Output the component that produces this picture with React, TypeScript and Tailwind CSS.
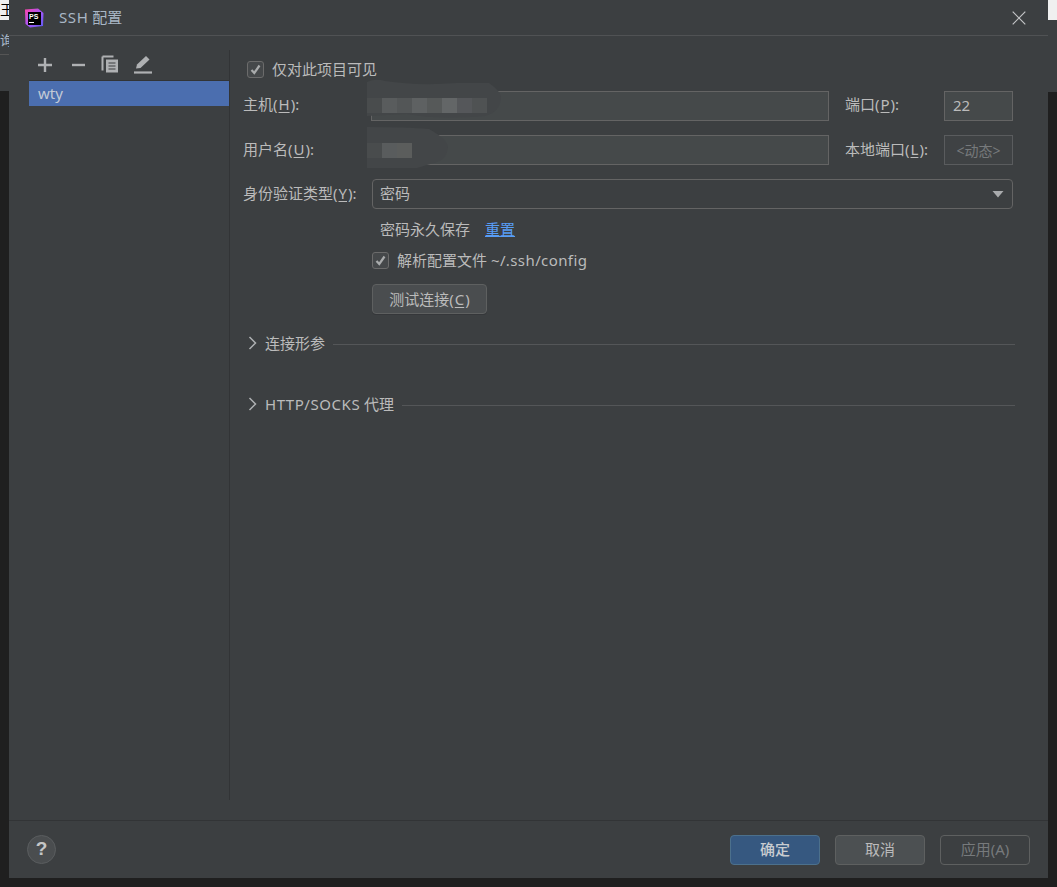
import type { ReactNode } from "react";

const cn = "font-['Noto_Sans','Noto_Sans_CJK_SC',sans-serif]";

function Mn({ children }: { children: ReactNode }) {
  return <span className="underline underline-offset-2 mx-[1px]">{children}</span>;
}

function Check({ children }: { children: ReactNode }) {
  return (
    <div className="flex items-center gap-2 h-[18px]">
      <span className="w-[17px] h-[17px] rounded-[3px] border border-[#6b6b6b] bg-[#45484a] flex items-center justify-center">
        <svg width="13" height="13" viewBox="0 0 13 13" fill="none">
          <path d="M2.5 7 L5.3 10 L10.5 2.5" stroke="#a9abac" strokeWidth="2.2" />
        </svg>
      </span>
      <span>{children}</span>
    </div>
  );
}

function Section({ children, className }: { children: ReactNode; className: string }) {
  return (
    <div className={`flex items-center h-5 ml-[5px] ${className}`}>
      <svg width="9" height="14" viewBox="0 0 9 14" fill="none" className="shrink-0">
        <path d="M1.5 1 L7.5 7 L1.5 13" stroke="#afb1b3" strokeWidth="1.5" />
      </svg>
      <span className="ml-[8px] mr-[8px] whitespace-nowrap">{children}</span>
      <div className="flex-1 h-px bg-[#545658] mt-[2px]" />
    </div>
  );
}

function FooterButton({ children, className }: { children: ReactNode; className: string }) {
  return (
    <button className={`w-[90px] h-[30px] rounded-[4px] border text-[15px] ${className}`}>{children}</button>
  );
}

function Smudge({ cells, className, cellTop, path, w, h }: { cells: string[]; className: string; cellTop: string; path: string; w: number; h: number }) {
  return (
    <div className={`absolute ${className}`}>
      <svg width={w} height={h} viewBox={`0 0 ${w} ${h}`}>
        <path d={path} fill="#434648" />
      </svg>
      <div className={`absolute left-0 flex ${cellTop}`}>
        {cells.map((c, i) => (
          <div key={i} className="w-[15px] h-[15px]" style={{ background: c }} />
        ))}
      </div>
    </div>
  );
}

export default function App() {
  return (
    <div className={`w-[1057px] h-[887px] flex bg-[#1f1f1f] overflow-hidden text-[15px] text-[#bbbbbb] ${cn}`}>
      <div className="w-[9px] flex flex-col overflow-hidden">
        <div className="h-[20px] bg-[#f0f0f0] text-black text-[14px] leading-[20px] whitespace-nowrap">王-</div>
        <div className="h-[35px] bg-[#3c3f41] border-b border-[#555] text-[#a9b7c6] text-[13px] leading-[40px] whitespace-nowrap">询(</div>
        <div className="h-[36px] bg-[#3c3f41]" />
      </div>

      <div className="w-[1039px] h-[878px] bg-[#3c3f41] flex flex-col relative">
        <div className="h-[36px] flex items-center border-b border-[#505254] pl-[15px] pr-[22px] shrink-0">
          <svg width="20" height="20" viewBox="0 0 20 20">
            <defs>
              <linearGradient id="ps" x1="0" y1="0" x2="1" y2="1">
                <stop offset="0" stopColor="#ff45a8" />
                <stop offset="0.5" stopColor="#a855f7" />
                <stop offset="1" stopColor="#5b5bf0" />
              </linearGradient>
            </defs>
            <path d="M1 1.5 L14 0.5 L19.5 5 L19 18 L6 19.5 L1.5 16 Z" fill="url(#ps)" />
            <rect x="4" y="4" width="13" height="13" fill="#000" />
            <text x="5" y="10.5" fontSize="7" fontWeight="700" fill="#fff" fontFamily="Liberation Sans">PS</text>
            <rect x="5" y="14" width="5" height="1" fill="#fff" />
          </svg>
          <span className="ml-[15px] text-[#a9b7c6]"><span className="tracking-[0.6px]">SSH</span> 配置</span>
          <svg width="14" height="14" viewBox="0 0 14 14" fill="none" className="ml-auto">
            <path d="M0.7 0.7 L13.3 13.3 M13.3 0.7 L0.7 13.3" stroke="#c4c6c7" strokeWidth="1.2" />
          </svg>
        </div>

        <div className="flex flex-1 min-h-0">
          <div className="w-[220px] pl-[20px] pt-[14px] shrink-0">
            <div className="h-[31px] flex items-start border-b border-[#323436]">
              <svg width="130" height="26" viewBox="0 0 130 26" className="text-[#afb1b3]">
                <path d="M9 15h14M16 8v14" stroke="currentColor" strokeWidth="2.4" fill="none" />
                <path d="M43 15h13" stroke="currentColor" strokeWidth="2.4" fill="none" />
                <path d="M73.5 6.5h11M73.5 6.5v14" stroke="currentColor" strokeWidth="2" fill="none" />
                <path d="M77 9.5h12v13h-12z" fill="currentColor" />
                <path d="M79.5 13h7M79.5 16h7M79.5 19h7" stroke="#3c3f41" strokeWidth="1.2" />
                <path d="M107 18.5l1-4 9-8.5 3.5 3.5-9 8.5z" fill="currentColor" />
                <path d="M105 22.5h18" stroke="currentColor" strokeWidth="2.2" />
              </svg>
            </div>
            <div className="h-[25px] bg-[#4b6eaf] pl-[9px] flex items-center text-[#c3cad6] text-[15px]">wty</div>
          </div>

          <div className="w-px h-[750px] bg-[#323436] mt-[14px]" />

          <div className="w-[786px] relative pl-[13px] pt-[24px]">
            <div className="ml-[4px]"><Check>仅对此项目可见</Check></div>

            <div className="flex items-center mt-[13px] h-[30px]">
              <label className="w-[128px] whitespace-nowrap -mt-[3px]">主机(<Mn>H</Mn>):</label>
              <div className="w-[458px] h-[30px] border border-[#646464] bg-[#45494a]" />
              <label className="ml-[16px] w-[99px] -mt-[3px]">端口(<Mn>P</Mn>):</label>
              <div className="w-[69px] h-[30px] border border-[#646464] bg-[#45494a] flex items-center pl-2 pb-[2px]">22</div>
            </div>

            <div className="flex items-center mt-[14px] h-[30px]">
              <label className="w-[128px] whitespace-nowrap -mt-[2px]">用户名(<Mn>U</Mn>):</label>
              <div className="w-[458px] h-[30px] border border-[#646464] bg-[#45494a]" />
              <label className="ml-[16px] w-[99px] whitespace-nowrap -mt-[2px]">本地端口(<Mn>L</Mn>):</label>
              <div className="w-[69px] h-[30px] border border-[#5a5c5e] bg-[#3f4244] flex items-center justify-center text-[#777a7c] text-[14px] whitespace-nowrap">&lt;动态&gt;</div>
            </div>

            <div className="flex items-center mt-[14px] h-[30px]">
              <label className="w-[129px] whitespace-nowrap -mt-[2px]">身份验证类型(<Mn>Y</Mn>):</label>
              <div className="w-[641px] h-[30px] rounded-[4px] border border-[#646464] bg-[#3c3f41] flex items-center pl-[7px] pr-[8px]">
                <span className="-mt-[1px]">密码</span>
                <svg width="12" height="8" viewBox="0 0 12 8" className="ml-auto">
                  <path d="M0.5 1h11L6 7.5z" fill="#a9abad" />
                </svg>
              </div>
            </div>

            <div className="ml-[137px] mt-[10px] h-[20px] flex items-center">
              <span>密码永久保存</span>
              <span className="ml-[15px] text-[#589df6] underline underline-offset-1">重置</span>
            </div>

            <div className="ml-[129px] mt-[12px]">
              <Check>解析配置文件 <span className="tracking-[0.4px]">~/.ssh/config</span></Check>
            </div>

            <button className="ml-[129px] mt-[15px] w-[115px] h-[30px] rounded-[4px] border border-[#5e6060] bg-[#4a4d4f] block text-[15px] text-[#bbbbbb] shadow-[0_1px_0_#35373a]">
              测试连接(<Mn>C</Mn>)
            </button>

            <Section className="mt-[19px] mr-[1px]">连接形参</Section>
            <Section className="mt-[41px] mr-[1px]"><span className="tracking-[0.55px]">HTTP/SOCKS</span> 代理</Section>

            <Smudge
              className="left-[137px] top-[42px]"
              cellTop="top-[20px]"
              w={134}
              h={44}
              path="M0 4 Q8 0 18 3 Q50 8 90 5 L122 5 Q132 12 134 18 Q134 34 118 38 Q70 42 40 36 L0 38 Z"
              cells={["#494c4d", "#595c5d", "#535657", "#5e6162", "#565959", "#636667", "#55575a", "#4f5253"]}
            />
            <Smudge
              className="left-[137px] top-[91px]"
              cellTop="top-[16px]"
              w={82}
              h={41}
              path="M0 0 Q40 0 62 2 Q80 12 81 20 Q80 32 70 35 L50 41 L0 41 Z"
              cells={["#494c4d", "#595c5d", "#5b5d5c"]}
            />
          </div>
        </div>

        <div className="h-[58px] border-t border-[#323436] shrink-0 flex items-center pl-[18px] pr-[18px]">
          <div className="w-[29px] h-[29px] rounded-full border border-[#5a5d5f] bg-[#4a4d4f] flex items-center justify-center text-[19px] font-bold text-[#c4c6c7] font-['Liberation_Sans',sans-serif]">?</div>
          <div className="ml-auto flex gap-[15px]">
            <FooterButton className="bg-[#365880] border-[#4c708c] text-[#c8ccd0] font-medium">确定</FooterButton>
            <FooterButton className="bg-[#4c5052] border-[#5e6060] text-[#bbbbbb]">取消</FooterButton>
            <FooterButton className="bg-[#3c3f41] border-[#5e6060] text-[#777a7c]">应用(A)</FooterButton>
          </div>
        </div>
      </div>

      <div className="w-[9px] flex flex-col">
        <div className="h-[20px] bg-[#f0f0f0]" />
        <div className="h-[72px] bg-[#3c3f41]" />
      </div>
    </div>
  );
}
